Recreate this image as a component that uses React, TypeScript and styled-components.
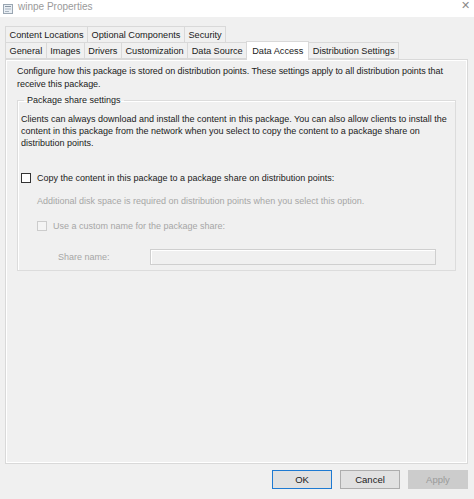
import React from "react";
import styled, {createGlobalStyle} from "styled-components";

const GlobalStyle = createGlobalStyle`
  html, body {
    margin: 0;
    padding: 0;
    background: #f0f0f0;
  }
  body {
    font-family: "Liberation Sans", Arial, sans-serif;
    font-size: 9px;
    color: #1a1a1a;
  }
`;

const Window = styled.div`
  display: flex;
  flex-direction: column;
  width: 474px;
  height: 499px;
  background: #f0f0f0;
  overflow: hidden;
`;

const TitleBar = styled.div`
  display: flex;
  align-items: center;
  height: 17px;
  padding: 0 4px 0 3px;
  background: #ffffff;
  color: #9a9a9a;
  font-size: 10px;
`;

const TitleText = styled.span`
  flex: 1;
  margin-left: 5px;
  margin-top: -4px;
`;

const CloseButton = styled.span`
  color: #8a8a8a;
  font-size: 11px;
  margin-top: -6px;
`;

const Body = styled.div`
  display: flex;
  flex-direction: column;
  flex: 1;
  padding: 10px 6px 0 5px;
`;

const TabRow = styled.div`
  display: flex;
  align-items: flex-end;
  height: 16px;
  position: relative;
  z-index: 1;
`;

const Tab = styled.div<{ $active?: boolean }>`
  display: flex;
  align-items: center;
  height: ${props => (props.$active ? 18 : 15)}px;
  padding: 0 ${props => (props.$active ? 5 : 3.5)}px;
  margin-bottom: ${props => (props.$active ? -1 : 0)}px;
  margin-right: -1px;
  background: ${props => (props.$active ? "#ffffff" : "#f0f0f0")};
  border: 1px solid #d9d9d9;
  border-bottom: ${props => (props.$active ? "none" : "1px solid #d9d9d9")};
  white-space: nowrap;
  color: #1a1a1a;
  font-size: 9.2px;
`;

const Panel = styled.div`
  display: flex;
  flex-direction: column;
  box-sizing: border-box;
  height: 405px;
  padding: 5px 11px 0 11px;
  border: 1px solid #d9d9d9;
  box-shadow: inset 1px 1px 0 #ffffff, inset -1px -1px 0 #ffffff;
  background: #f0f0f0;
`;

const Intro = styled.p`
  margin: 0;
  line-height: 12.5px;
  letter-spacing: -0.05px;
`;

const Group = styled.fieldset`
  margin: 4px 0 0 0;
  padding: 3px 6px 6px 3px;
  height: 177px;
  border: 1px solid #dcdcdc;
  box-shadow: 1px 1px 0 #ffffff inset;
  box-sizing: border-box;
`;

const Legend = styled.legend`
  margin-left: 3px;
  padding: 0 3px;
  line-height: 12px;
  color: #1a1a1a;
`;

const GroupText = styled.p`
  margin: 4px 0 0 0;
  line-height: 12px;
`;

const CheckRow = styled.label<{ $disabled?: boolean; $indent?: number; $top: number }>`
  display: flex;
  align-items: center;
  gap: 6px;
  margin: ${props => props.$top}px 0 0 ${props => props.$indent || 0}px;
  color: ${props => (props.$disabled ? "#a6a6a6" : "#1a1a1a")};
  line-height: 12px;
`;

const Box = styled.span<{ $disabled?: boolean }>`
  display: inline-block;
  width: 10px;
  height: 10px;
  box-sizing: border-box;
  background: #ffffff;
  border: 1px solid ${props => (props.$disabled ? "#cccccc" : "#333333")};
  ${props => props.$disabled && "background: #f4f4f4;"}
`;

const Hint = styled.p`
  margin: 11px 0 0 16px;
  line-height: 12px;
  color: #a6a6a6;
`;

const FieldRow = styled.div`
  display: flex;
  align-items: center;
  margin: 17px 0 0 37px;
  color: #a6a6a6;
`;

const FieldLabel = styled.span`
  width: 92px;
`;

const FieldInput = styled.div`
  width: 286px;
  height: 16px;
  box-sizing: border-box;
  border: 1px solid #cfcfcf;
  background: #f0f0f0;
  box-shadow: inset 1px 1px 0 #ffffff;
`;

const Footer = styled.div`
  display: flex;
  justify-content: flex-end;
  gap: 8px;
  padding: 6px 0 0 0;
`;

const Button = styled.div<{ $primary?: boolean; $disabled?: boolean }>`
  display: flex;
  align-items: center;
  justify-content: center;
  width: 60px;
  height: 19px;
  box-sizing: border-box;
  background: ${props => (props.$disabled ? "#cccccc" : "#e1e1e1")};
  border: 1px solid ${props => (props.$primary ? "#1e7ad2" : props.$disabled ? "#cccccc" : "#adadad")};
  color: ${props => (props.$disabled ? "#9a9a9a" : "#1a1a1a")};
  font-size: 9.5px;
`;

function WindowIcon() {
    return (
        <svg width="10" height="10" viewBox="0 0 10 10">
            <rect x="0.5" y="0.5" width="9" height="9" fill="#e8eef4" stroke="#9aa6b2"/>
            <rect x="2" y="2" width="6" height="1" fill="#8a97a4"/>
            <rect x="2" y="4.5" width="6" height="1" fill="#a9b4bf"/>
            <rect x="2" y="7" width="4" height="1" fill="#a9b4bf"/>
        </svg>
    );
}

export default function App() {
    return (
        <Window>
            <GlobalStyle/>
            <TitleBar>
                <WindowIcon/>
                <TitleText>winpe Properties</TitleText>
                <CloseButton>✕</CloseButton>
            </TitleBar>
            <Body>
                <TabRow>
                    <Tab>Content Locations</Tab>
                    <Tab>Optional Components</Tab>
                    <Tab>Security</Tab>
                </TabRow>
                <TabRow>
                    <Tab>General</Tab>
                    <Tab>Images</Tab>
                    <Tab>Drivers</Tab>
                    <Tab>Customization</Tab>
                    <Tab>Data Source</Tab>
                    <Tab $active>Data Access</Tab>
                    <Tab>Distribution Settings</Tab>
                </TabRow>
                <Panel>
                    <Intro>
                        Configure how this package is stored on distribution points. These settings apply to all distribution points that receive this package.
                    </Intro>
                    <Group>
                        <Legend>Package share settings</Legend>
                        <GroupText>
                            Clients can always download and install the content in this package. You can also allow clients to install the content in this package from the network when you select to copy the content to a package share on distribution points.
                        </GroupText>
                        <CheckRow $top={23}>
                            <Box/>
                            Copy the content in this package to a package share on distribution points:
                        </CheckRow>
                        <Hint>Additional disk space is required on distribution points when you select this option.</Hint>
                        <CheckRow $top={13} $indent={16} $disabled>
                            <Box $disabled/>
                            Use a custom name for the package share:
                        </CheckRow>
                        <FieldRow>
                            <FieldLabel>Share name:</FieldLabel>
                            <FieldInput/>
                        </FieldRow>
                    </Group>
                </Panel>
                <Footer>
                    <Button $primary>OK</Button>
                    <Button>Cancel</Button>
                    <Button $disabled>Apply</Button>
                </Footer>
            </Body>
        </Window>
    );
}
